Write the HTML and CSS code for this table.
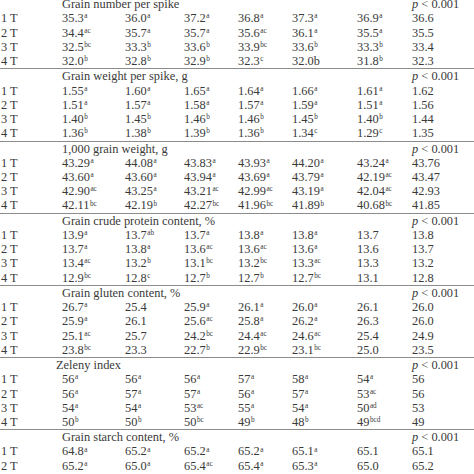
FILE: index.html
```html
<!DOCTYPE html>
<html>
<head>
<meta charset="utf-8">
<link rel="stylesheet" href="styles.css">
</head>
<body>
<div class="table">
  <div class="section">
    <div class="title">Grain number per spike</div><div class="pv"><i>p</i> &lt; 0.001</div>
    <div>1 T</div><div>35.3<sup>a</sup></div><div>36.0<sup>a</sup></div><div>37.2<sup>a</sup></div><div>36.8<sup>a</sup></div><div>37.3<sup>a</sup></div><div>36.9<sup>a</sup></div><div>36.6</div>
    <div>2 T</div><div>34.4<sup>ac</sup></div><div>35.7<sup>a</sup></div><div>35.7<sup>a</sup></div><div>35.6<sup>ac</sup></div><div>36.1<sup>a</sup></div><div>35.5<sup>a</sup></div><div>35.5</div>
    <div>3 T</div><div>32.5<sup>bc</sup></div><div>33.3<sup>b</sup></div><div>33.6<sup>b</sup></div><div>33.9<sup>bc</sup></div><div>33.6<sup>b</sup></div><div>33.3<sup>b</sup></div><div>33.4</div>
    <div>4 T</div><div>32.0<sup>b</sup></div><div>32.8<sup>b</sup></div><div>32.9<sup>b</sup></div><div>32.3<sup>c</sup></div><div>32.0b</div><div>31.8<sup>b</sup></div><div>32.3</div>
  </div>
  <div class="section">
    <div class="title">Grain weight per spike, g</div><div class="pv"><i>p</i> &lt; 0.001</div>
    <div>1 T</div><div>1.55<sup>a</sup></div><div>1.60<sup>a</sup></div><div>1.65<sup>a</sup></div><div>1.64<sup>a</sup></div><div>1.66<sup>a</sup></div><div>1.61<sup>a</sup></div><div>1.62</div>
    <div>2 T</div><div>1.51<sup>a</sup></div><div>1.57<sup>a</sup></div><div>1.58<sup>a</sup></div><div>1.57<sup>a</sup></div><div>1.59<sup>a</sup></div><div>1.51<sup>a</sup></div><div>1.56</div>
    <div>3 T</div><div>1.40<sup>b</sup></div><div>1.45<sup>b</sup></div><div>1.46<sup>b</sup></div><div>1.46<sup>b</sup></div><div>1.45<sup>b</sup></div><div>1.40<sup>b</sup></div><div>1.44</div>
    <div>4 T</div><div>1.36<sup>b</sup></div><div>1.38<sup>b</sup></div><div>1.39<sup>b</sup></div><div>1.36<sup>b</sup></div><div>1.34<sup>c</sup></div><div>1.29<sup>c</sup></div><div>1.35</div>
  </div>
  <div class="section">
    <div class="title">1,000 grain weight, g</div><div class="pv"><i>p</i> &lt; 0.001</div>
    <div>1 T</div><div>43.29<sup>a</sup></div><div>44.08<sup>a</sup></div><div>43.83<sup>a</sup></div><div>43.93<sup>a</sup></div><div>44.20<sup>a</sup></div><div>43.24<sup>a</sup></div><div>43.76</div>
    <div>2 T</div><div>43.60<sup>a</sup></div><div>43.60<sup>a</sup></div><div>43.94<sup>a</sup></div><div>43.69<sup>a</sup></div><div>43.79<sup>a</sup></div><div>42.19<sup>ac</sup></div><div>43.47</div>
    <div>3 T</div><div>42.90<sup>ac</sup></div><div>43.25<sup>a</sup></div><div>43.21<sup>ac</sup></div><div>42.99<sup>ac</sup></div><div>43.19<sup>a</sup></div><div>42.04<sup>ac</sup></div><div>42.93</div>
    <div>4 T</div><div>42.11<sup>bc</sup></div><div>42.19<sup>b</sup></div><div>42.27<sup>bc</sup></div><div>41.96<sup>bc</sup></div><div>41.89<sup>b</sup></div><div>40.68<sup>bc</sup></div><div>41.85</div>
  </div>
  <div class="section">
    <div class="title">Grain crude protein content, %</div><div class="pv"><i>p</i> &lt; 0.001</div>
    <div>1 T</div><div>13.9<sup>a</sup></div><div>13.7<sup>ab</sup></div><div>13.7<sup>a</sup></div><div>13.8<sup>a</sup></div><div>13.8<sup>a</sup></div><div>13.7</div><div>13.8</div>
    <div>2 T</div><div>13.7<sup>a</sup></div><div>13.8<sup>a</sup></div><div>13.6<sup>ac</sup></div><div>13.6<sup>ac</sup></div><div>13.6<sup>a</sup></div><div>13.6</div><div>13.7</div>
    <div>3 T</div><div>13.4<sup>ac</sup></div><div>13.2<sup>b</sup></div><div>13.1<sup>bc</sup></div><div>13.2<sup>bc</sup></div><div>13.3<sup>ac</sup></div><div>13.3</div><div>13.2</div>
    <div>4 T</div><div>12.9<sup>bc</sup></div><div>12.8<sup>c</sup></div><div>12.7<sup>b</sup></div><div>12.7<sup>b</sup></div><div>12.7<sup>bc</sup></div><div>13.1</div><div>12.8</div>
  </div>
  <div class="section">
    <div class="title">Grain gluten content, %</div><div class="pv"><i>p</i> &lt; 0.001</div>
    <div>1 T</div><div>26.7<sup>a</sup></div><div>25.4</div><div>25.9<sup>a</sup></div><div>26.1<sup>a</sup></div><div>26.0<sup>a</sup></div><div>26.1</div><div>26.0</div>
    <div>2 T</div><div>25.9<sup>a</sup></div><div>26.1</div><div>25.6<sup>ac</sup></div><div>25.8<sup>a</sup></div><div>26.2<sup>a</sup></div><div>26.3</div><div>26.0</div>
    <div>3 T</div><div>25.1<sup>ac</sup></div><div>25.7</div><div>24.2<sup>bc</sup></div><div>24.4<sup>ac</sup></div><div>24.6<sup>ac</sup></div><div>25.4</div><div>24.9</div>
    <div>4 T</div><div>23.8<sup>bc</sup></div><div>23.3</div><div>22.7<sup>b</sup></div><div>22.9<sup>bc</sup></div><div>23.1<sup>bc</sup></div><div>25.0</div><div>23.5</div>
  </div>
  <div class="section">
    <div class="title shift">Zeleny index</div><div class="pv"><i>p</i> &lt; 0.001</div>
    <div>1 T</div><div>56<sup>a</sup></div><div>56<sup>a</sup></div><div>56<sup>a</sup></div><div>57<sup>a</sup></div><div>58<sup>a</sup></div><div>54<sup>a</sup></div><div>56</div>
    <div>2 T</div><div>56<sup>a</sup></div><div>57<sup>a</sup></div><div>57<sup>a</sup></div><div>56<sup>a</sup></div><div>57<sup>a</sup></div><div>53<sup>ac</sup></div><div>56</div>
    <div>3 T</div><div>54<sup>a</sup></div><div>54<sup>a</sup></div><div>53<sup>ac</sup></div><div>55<sup>a</sup></div><div>54<sup>a</sup></div><div>50<sup>ad</sup></div><div>53</div>
    <div>4 T</div><div>50<sup>b</sup></div><div>50<sup>b</sup></div><div>50<sup>bc</sup></div><div>49<sup>b</sup></div><div>48<sup>b</sup></div><div>49<sup>bcd</sup></div><div>49</div>
  </div>
  <div class="section">
    <div class="title">Grain starch content, %</div><div class="pv"><i>p</i> &lt; 0.001</div>
    <div>1 T</div><div>64.8<sup>a</sup></div><div>65.2<sup>a</sup></div><div>65.2<sup>a</sup></div><div>65.2<sup>a</sup></div><div>65.1<sup>a</sup></div><div>65.1</div><div>65.1</div>
    <div>2 T</div><div>65.2<sup>a</sup></div><div>65.0<sup>a</sup></div><div>65.4<sup>ac</sup></div><div>65.4<sup>a</sup></div><div>65.3<sup>a</sup></div><div>65.0</div><div>65.2</div>
  </div>
</div>
</body>
</html>
```

FILE: styles.css
```css
html, body {
  margin: 0;
  padding: 0;
  background: #ffffff;
  overflow: hidden;
}
body {
  width: 474px;
  height: 474px;
}
.table {
  margin-top: -3.8px;
  font-family: "Liberation Serif", "Times New Roman", serif;
  font-size: 12.4px;
  color: #3a3a3a;
}
.section {
  display: grid;
  grid-template-columns: 61px 63px 59px 54px 54px 65px 55px 1fr;
  grid-auto-rows: 14.24px;
  border-top: 1.6px solid #8c8c8c;
  line-height: 14.24px;
  padding-left: 1px;
}
.section > div {
  white-space: nowrap;
}
.title {
  grid-column: 2 / 8;
}
.title.shift {
  margin-left: -6px;
}
.pv {
  grid-column: 8;
}
sup {
  font-size: 0.58em;
  line-height: 0;
  vertical-align: 0.55em;
  margin-left: 0.5px;
}
```
